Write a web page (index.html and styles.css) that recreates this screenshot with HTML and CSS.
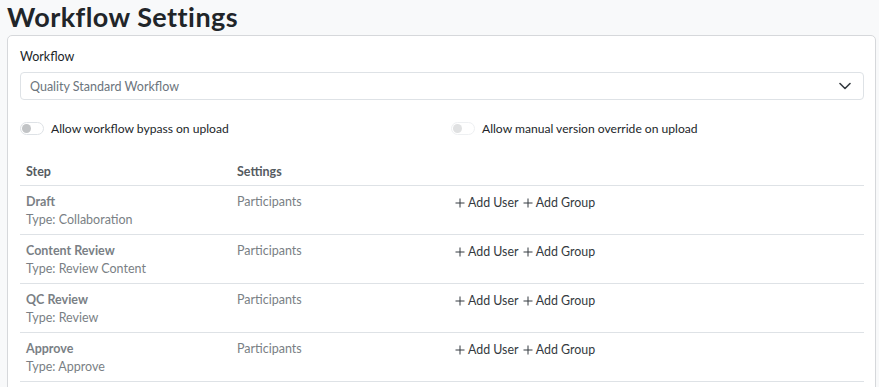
FILE: index.html
```html
<!DOCTYPE html>
<html lang="en">
<head>
    <meta charset="UTF-8">
    <meta name="viewport" content="width=device-width, initial-scale=1.0">
    <title>Workflow Settings</title>
    <link rel="stylesheet" href="styles.css">
</head>
<body>
    <h1 class="page-title">Workflow Settings</h1>

    <div class="card">
        <label class="field-label" for="workflow">Workflow</label>
        <div class="select">
            <span class="select-value">Quality Standard Workflow</span>
            <svg class="chevron" width="12" height="8" viewBox="0 0 12 8">
                <path d="M1 1.5 L6 6.5 L11 1.5" fill="none" stroke="#343a40" stroke-width="1.6" stroke-linecap="round" stroke-linejoin="round"/>
            </svg>
        </div>

        <div class="toggles">
            <div class="toggle-item">
                <span class="switch"><span class="knob"></span></span>
                <span>Allow workflow bypass on upload</span>
            </div>
            <div class="toggle-item disabled">
                <span class="switch"><span class="knob"></span></span>
                <span>Allow manual version override on upload</span>
            </div>
        </div>

        <table class="steps">
            <thead>
                <tr>
                    <th class="col-step">Step</th>
                    <th class="col-settings">Settings</th>
                    <th></th>
                </tr>
            </thead>
            <tbody>
                <tr>
                    <td><div class="step-name">Draft</div><div class="step-type">Type: Collaboration</div></td>
                    <td class="setting">Participants</td>
                    <td class="actions">
                        <span class="add"><svg class="plus" width="10" height="10" viewBox="0 0 10 10"><path d="M5 0.5 V9.5 M0.5 5 H9.5" stroke="#343a40" stroke-width="1"/></svg>Add User</span>
                        <span class="add"><svg class="plus" width="10" height="10" viewBox="0 0 10 10"><path d="M5 0.5 V9.5 M0.5 5 H9.5" stroke="#343a40" stroke-width="1"/></svg>Add Group</span>
                    </td>
                </tr>
                <tr>
                    <td><div class="step-name">Content Review</div><div class="step-type">Type: Review Content</div></td>
                    <td class="setting">Participants</td>
                    <td class="actions">
                        <span class="add"><svg class="plus" width="10" height="10" viewBox="0 0 10 10"><path d="M5 0.5 V9.5 M0.5 5 H9.5" stroke="#343a40" stroke-width="1"/></svg>Add User</span>
                        <span class="add"><svg class="plus" width="10" height="10" viewBox="0 0 10 10"><path d="M5 0.5 V9.5 M0.5 5 H9.5" stroke="#343a40" stroke-width="1"/></svg>Add Group</span>
                    </td>
                </tr>
                <tr>
                    <td><div class="step-name">QC Review</div><div class="step-type">Type: Review</div></td>
                    <td class="setting">Participants</td>
                    <td class="actions">
                        <span class="add"><svg class="plus" width="10" height="10" viewBox="0 0 10 10"><path d="M5 0.5 V9.5 M0.5 5 H9.5" stroke="#343a40" stroke-width="1"/></svg>Add User</span>
                        <span class="add"><svg class="plus" width="10" height="10" viewBox="0 0 10 10"><path d="M5 0.5 V9.5 M0.5 5 H9.5" stroke="#343a40" stroke-width="1"/></svg>Add Group</span>
                    </td>
                </tr>
                <tr>
                    <td><div class="step-name">Approve</div><div class="step-type">Type: Approve</div></td>
                    <td class="setting">Participants</td>
                    <td class="actions">
                        <span class="add"><svg class="plus" width="10" height="10" viewBox="0 0 10 10"><path d="M5 0.5 V9.5 M0.5 5 H9.5" stroke="#343a40" stroke-width="1"/></svg>Add User</span>
                        <span class="add"><svg class="plus" width="10" height="10" viewBox="0 0 10 10"><path d="M5 0.5 V9.5 M0.5 5 H9.5" stroke="#343a40" stroke-width="1"/></svg>Add Group</span>
                    </td>
                </tr>
            </tbody>
        </table>
    </div>
</body>
</html>
```

FILE: styles.css
```css
body {
    margin: 0;
    padding: 0 3px 0 7px;
    background-color: #f8f9fa;
    font-family: Lato, "Open Sans", sans-serif;
    font-size: 12.5px;
    color: #212529;
    overflow: hidden;
}

.page-title {
    margin: 0;
    font-size: 27px;
    font-weight: 700;
    line-height: 34px;
    letter-spacing: 0.45px;
}

.card {
    margin-top: 1px;
    background-color: #fff;
    border: 1px solid #d6d8db;
    border-radius: 5px;
    padding: 12px 11px 0 12px;
    height: 400px;
}

.field-label {
    display: block;
    line-height: 18px;
    margin-bottom: 6px;
}

.select {
    display: flex;
    justify-content: space-between;
    align-items: center;
    height: 26px;
    border: 1px solid #dee2e6;
    border-radius: 4px;
    padding: 0 12px 0 9px;
}

.select-value {
    color: #6c757d;
}

.toggles {
    display: grid;
    grid-template-columns: 1fr 1fr;
    column-gap: 18px;
    margin-top: 18px;
}

.toggle-item {
    display: flex;
    align-items: center;
    gap: 7px;
    height: 20px;
    font-size: 12.1px;
}

.toggle-item.disabled .switch {
    opacity: 0.5;
}

.switch {
    width: 22px;
    height: 11px;
    border: 1px solid #dee2e6;
    border-radius: 7px;
    position: relative;
    background-color: #fff;
    flex-shrink: 0;
}

.knob {
    position: absolute;
    left: 1px;
    top: 1px;
    width: 9px;
    height: 9px;
    border-radius: 50%;
    background-color: #c2c4c6;
}

.steps {
    width: 100%;
    margin-top: 19px;
    border-collapse: collapse;
}

.steps th {
    text-align: left;
    font-weight: 700;
    color: #555b61;
    padding: 6px 6px 4px;
    line-height: 18px;
    border-bottom: 1px solid #dee2e6;
}

.col-step {
    width: 199px;
}

.col-settings {
    width: 206px;
}

.steps td {
    vertical-align: top;
    padding: 7px 6px 5px;
    line-height: 18px;
    border-bottom: 1px solid #dee2e6;
    color: #7a7f85;
}

.step-name {
    font-weight: 700;
}

.steps td.actions {
    padding-top: 8px;
    padding-left: 6px;
}

.add {
    display: inline-flex;
    align-items: center;
    gap: 3px;
    color: #343a40;
    margin-right: 1px;
    font-size: 12.4px;
}
```
